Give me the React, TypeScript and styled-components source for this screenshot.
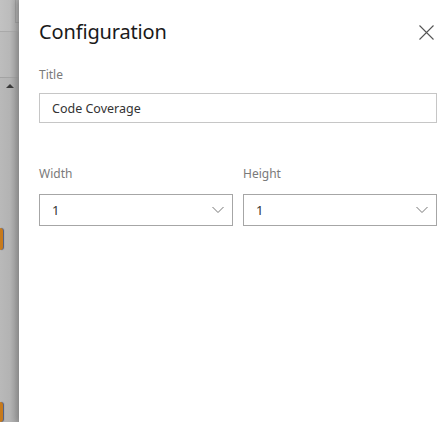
import React from "react";
import styled, { createGlobalStyle } from "styled-components";

const Global = createGlobalStyle`
  html, body { margin: 0; padding: 0; height: 100%; }
  body { font-family: "Noto Sans", "Open Sans", sans-serif; background: #fff; overflow: hidden; }
  #root { height: 100%; }
`;

const Page = styled.div`
  display: flex;
  width: 448px;
  height: 422px;
`;

const Backdrop = styled.div`
  width: 19px;
  flex: none;
  display: flex;
  flex-direction: column;
  background: linear-gradient(to right, #b9b9b9 0px, #b3b3b3 10px, #a2a2a2 19px);
  position: relative;
`;

const BackTop = styled.div`
  height: 31px;
  flex: none;
  border-bottom: 1px solid #a9a9a9;
  background: linear-gradient(to right, #c2c2c2 0px, #bcbcbc 10px, #a9a9a9 19px);
  display: flex;
  justify-content: flex-end;
`;

const BackTab = styled.div`
  width: 3px;
  height: 22px;
  border-left: 1px solid #9e9e9e;
  border-bottom: 1px solid #9e9e9e;
`;

const BackSection = styled.div`
  height: 45px;
  flex: none;
  border-bottom: 1px solid #a3a3a3;
  background: linear-gradient(to right, #bdbdbd 0px, #b7b7b7 10px, #a5a5a5 19px);
`;

const Caret = styled.div`
  margin: 6px 0 0 6px;
  width: 0;
  height: 0;
  border-left: 4px solid transparent;
  border-right: 4px solid transparent;
  border-bottom: 4px solid #3a3a3a;
`;

const Blob = styled.div<{ $top: number; $h: number }>`
  position: absolute;
  left: 0;
  top: ${(p) => p.$top}px;
  width: 3px;
  height: ${(p) => p.$h}px;
  background: #c77a1c;
  border-radius: 0 3px 3px 0;
  box-shadow: 1px 0 1px #4a5a80;
`;

const Panel = styled.div`
  flex: 1;
  background: #fff;
  box-shadow: -3px 0 6px rgba(0, 0, 0, 0.18);
  padding: 16px 11px 0 20px;
  display: flex;
  flex-direction: column;
  color: #333;
  z-index: 1;
`;

const Header = styled.div`
  display: flex;
  align-items: center;
  justify-content: space-between;
  height: 30px;
`;

const Heading = styled.h1`
  margin: 0;
  font-family: "Noto Sans", sans-serif;
  font-weight: 400;
  font-size: 20px;
  letter-spacing: -0.15px;
  color: #1a1a1a;
`;

const CloseButton = styled.button`
  border: 0;
  background: none;
  padding: 0;
  width: 16px;
  height: 16px;
  margin-right: 3px;
  margin-top: 3px;
  display: flex;
  align-items: center;
  justify-content: center;
`;

const Field = styled.div`
  display: flex;
  flex-direction: column;
  flex: 1;
`;

const Label = styled.label<{ $gap: number }>`
  font-size: 12px;
  color: #7a7a7a;
  line-height: 16px;
  margin-bottom: ${(p) => p.$gap}px;
`;

const TextBox = styled.div`
  height: 28px;
  border: 1px solid #c6c6c6;
  display: flex;
  align-items: center;
  padding: 0 12px;
  font-size: 12.5px;
  color: #333;
`;

const Row = styled.div`
  display: flex;
  gap: 10px;
  margin-top: 43px;
`;

const Select = styled.div`
  height: 30px;
  border: 1px solid #a6a6a6;
  display: flex;
  align-items: center;
  justify-content: space-between;
  padding: 0 8px 0 12px;
  font-size: 13px;
  color: #333;
`;

const TitleField = styled(Field)`
  margin-top: 21px;
  flex: none;
`;

const Chevron = () => (
  <svg width="12" height="8" viewBox="0 0 12 8">
    <path d="M0.5 1 L6 6.5 L11.5 1" fill="none" stroke="#777" strokeWidth="1" />
  </svg>
);

export default function App() {
  return (
    <Page>
      <Global />
      <Backdrop>
        <BackTop>
          <BackTab />
        </BackTop>
        <BackSection />
        <Caret />
        <Blob $top={228} $h={22} />
        <Blob $top={402} $h={20} />
      </Backdrop>
      <Panel>
        <Header>
          <Heading>Configuration</Heading>
          <CloseButton aria-label="Close">
            <svg width="15" height="15" viewBox="0 0 15 15">
              <path d="M0.5 0.5 L14.5 14.5 M14.5 0.5 L0.5 14.5" stroke="#555" strokeWidth="1.1" />
            </svg>
          </CloseButton>
        </Header>
        <TitleField>
          <Label $gap={10}>Title</Label>
          <TextBox>Code Coverage</TextBox>
        </TitleField>
        <Row>
          <Field>
            <Label $gap={12}>Width</Label>
            <Select>
              1
              <Chevron />
            </Select>
          </Field>
          <Field>
            <Label $gap={12}>Height</Label>
            <Select>
              1
              <Chevron />
            </Select>
          </Field>
        </Row>
      </Panel>
    </Page>
  );
}
